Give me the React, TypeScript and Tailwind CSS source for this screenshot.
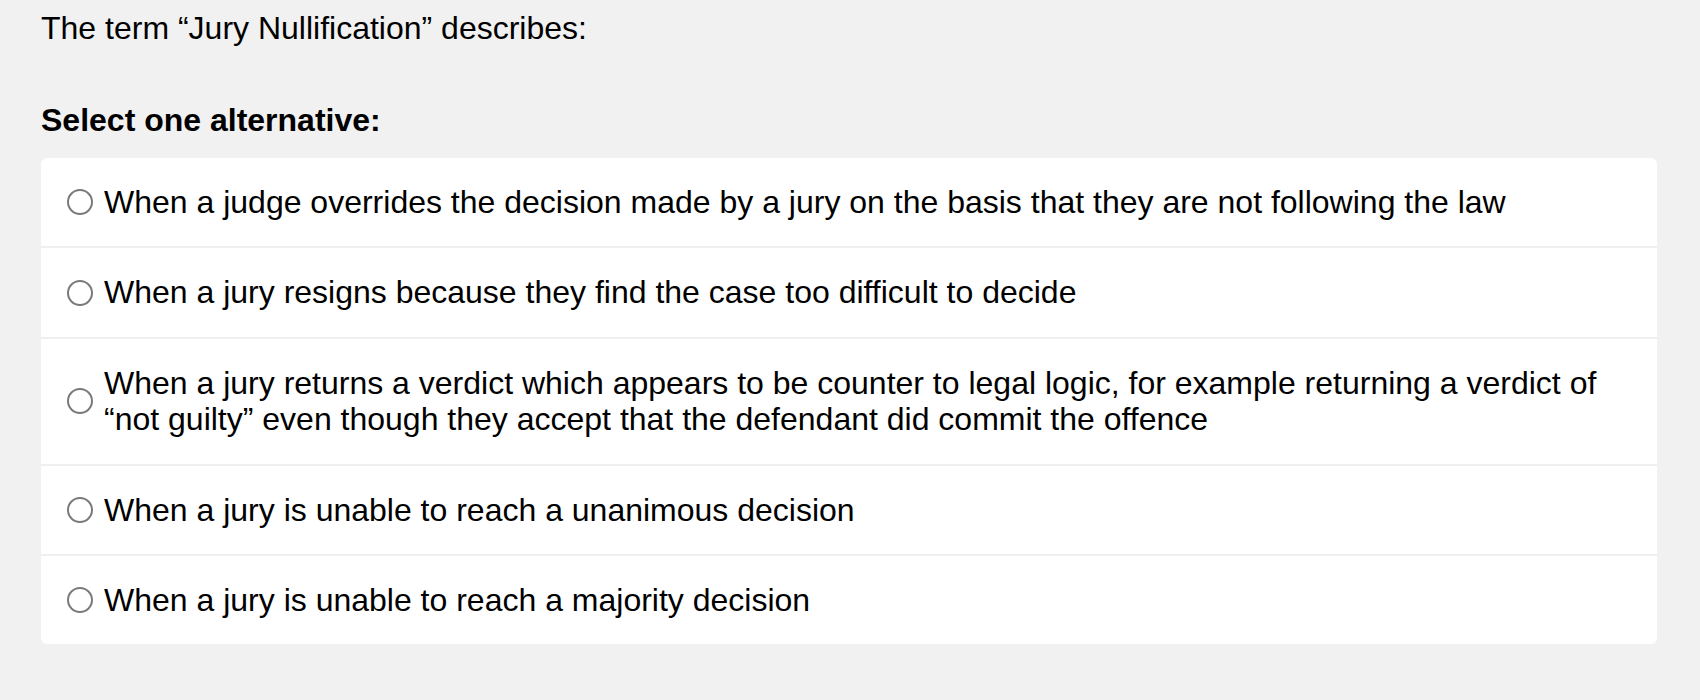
import React from "react";

const options = [
  "When a judge overrides the decision made by a jury on the basis that they are not following the law",
  "When a jury resigns because they find the case too difficult to decide",
  "When a jury returns a verdict which appears to be counter to legal logic, for example returning a verdict of “not guilty” even though they accept that the defendant did commit the offence",
  "When a jury is unable to reach a unanimous decision",
  "When a jury is unable to reach a majority decision",
];

export default function App() {
  return (
    <div
      className="min-h-[700px] w-full bg-[#f1f1f1] pt-[10px] text-black"
      style={{ fontFamily: '"Liberation Sans", Arial, sans-serif' }}
    >
      <div className="ml-[41px] w-[1616px]">
        <p className="text-[32px] leading-[36px]">The term “Jury Nullification” describes:</p>
        <p className="mt-[56px] text-[32px] font-bold leading-[36px]">Select one alternative:</p>
        <div className="mt-[20px] flex flex-col gap-[2px] overflow-hidden rounded-[6px] bg-[#efefef]">
          {options.map((o, i) => (
            <label
              key={i}
              className="flex items-center gap-[11px] bg-white py-[26px] pl-[26px] pr-[26px] text-[32px] leading-[36.4px]"
            >
              <span className="h-[26px] w-[26px] shrink-0 rounded-full border-2 border-[#7a7a7a] bg-white" />
              <span>{o}</span>
            </label>
          ))}
        </div>
      </div>
    </div>
  );
}
